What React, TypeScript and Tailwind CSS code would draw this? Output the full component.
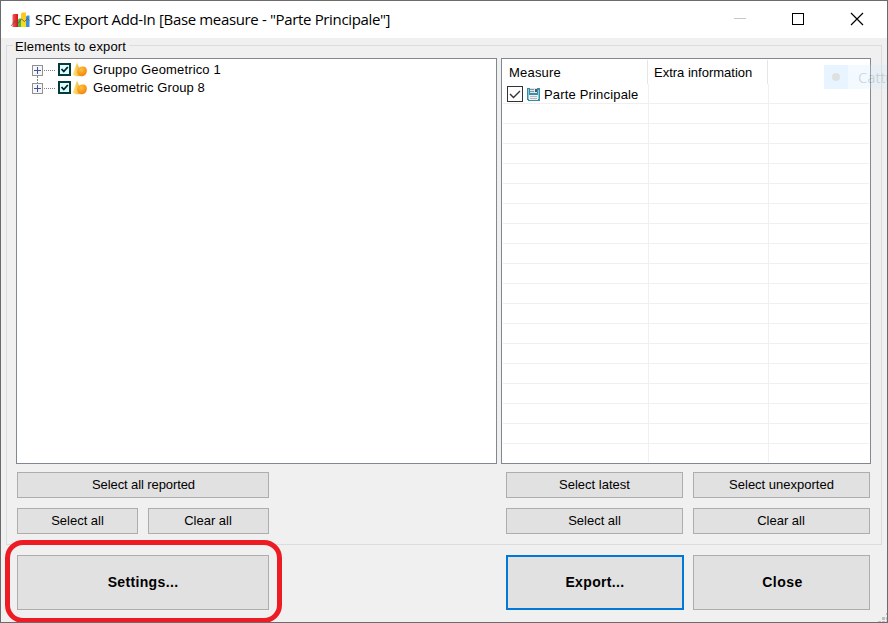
import React from 'react';
import clsx from 'clsx';

interface PushButtonProps {
  label: string;
  className?: string;
  textClass?: string;
  primary?: boolean;
}

const PushButton = ({ label, className, textClass, primary }: PushButtonProps) => (
  <button
    className={clsx(
      'flex shrink-0 items-center justify-center bg-[#e1e1e1] whitespace-nowrap',
      primary ? 'border-2 border-[#0078d7]' : 'border border-[#adadad]',
      className
    )}
  >
    <span className={textClass}>{label}</span>
  </button>
);

const AppIcon = () => (
  <svg width="20" height="18" viewBox="0 0 20 18" className="shrink-0">
    <defs>
      <linearGradient id="bar-red" x1="0" y1="0" x2="1" y2="0">
        <stop offset="0" stopColor="#f45a5a" />
        <stop offset="1" stopColor="#d81010" />
      </linearGradient>
      <linearGradient id="bar-yellow" x1="0" y1="0" x2="0" y2="1">
        <stop offset="0" stopColor="#ffc41c" />
        <stop offset="1" stopColor="#f4e020" />
      </linearGradient>
    </defs>
    <path d="M2.500 4l1-1H8v13H2.500z" fill="url(#bar-red)" />
    <path d="M8 8.500l1-1h2V16H8z" fill="#4cb848" />
    <path d="M11 2.500L12 1.500h4V16h-5z" fill="url(#bar-yellow)" />
    <path d="M16 5.500l1-1h2.500V16H16z" fill="#3f8fd8" />
    <path d="M1 15l4-5 3 2.500 3.500-4.500 3 2.500 3-3 2 2" fill="none" stroke="#555" strokeWidth="1" opacity=".75" />
  </svg>
);

const ShapesIcon = () => (
  <svg width="16" height="16" viewBox="0 0 16 16" className="shrink-0">
    <defs>
      <linearGradient id="cone" x1="0" y1="0" x2="1" y2="0">
        <stop offset="0" stopColor="#ffe884" />
        <stop offset="1" stopColor="#eda51c" />
      </linearGradient>
      <radialGradient id="ball" cx=".4" cy=".3" r=".7">
        <stop offset="0" stopColor="#ffc13c" />
        <stop offset="1" stopColor="#ef8510" />
      </radialGradient>
    </defs>
    <path d="M5 .5L.8 12.500c1.200 2 7.400 2.300 9.200.8z" fill="url(#cone)" />
    <path d="M5.500 8C6.500 4.200 12 3.600 14 5.800c1.800 2.600.6 7.200-2.700 8.300C8 15 4.500 12.500 5.500 8z" fill="url(#ball)" />
  </svg>
);

const FloppyIcon = () => (
  <svg width="13" height="13" viewBox="0 0 13 13" className="shrink-0" shapeRendering="crispEdges">
    <path d="M0 0h12l1 1v12H1l-1-1z" fill="#3c8ca6" />
    <path d="M1 1h1v10H1zM11 2h1v9h-1z" fill="#7ad0e4" />
    <path d="M3 0h7v5H3z" fill="#dfe5e8" />
    <path d="M3 1h4v1H3zM3 3h4v1H3z" fill="#8b979c" />
    <path d="M8 1h2v3H8z" fill="#4a5a60" />
    <path d="M2 7h9v5H2z" fill="#f0f0f0" />
    <path d="M3 8h7v1H3zM3 10h7v1H3z" fill="#b4bcc0" />
  </svg>
);

const TreeRow = ({ label, last, textClass }: { label: string; last?: boolean; textClass: string }) => (
  <div className="flex h-[18px] items-center">
    <svg width="24" height="18" className="shrink-0" shapeRendering="crispEdges">
      {last ? (
        <path d="M5.500 0v4" stroke="#808080" strokeDasharray="2 1" />
      ) : (
        <path d="M5.500 15v3" stroke="#808080" strokeDasharray="2 1" />
      )}
      <path d="M12 9.500h11" stroke="#808080" strokeDasharray="1 1" />
      <rect x=".5" y="4.500" width="10" height="10" fill="#f6f6f6" stroke="#919191" />
      <path d="M2 9.500h7M5.500 6v7" stroke="#3a52a8" />
    </svg>
    <svg width="13" height="18" className="ml-0.5 shrink-0">
      <rect x="1" y="3" width="11" height="11" fill="#dcffff" stroke="#043c3c" strokeWidth="2" />
      <path d="M3.500 8l2.300 2.500 4-4.500" fill="none" stroke="#022" strokeWidth="1.800" />
    </svg>
    <div className="ml-px">
      <ShapesIcon />
    </div>
    <span className={clsx('ml-[5px] whitespace-nowrap', textClass)}>{label}</span>
  </div>
);

const rows = Array.from({ length: 18 }, (_, i) => i);

const TitleBar = () => (
  <div className="flex h-[37px] shrink-0 items-center bg-white pl-[9px]">
    <AppIcon />
    <span className="mb-0.5 ml-[5px] whitespace-nowrap font-['Open_Sans',sans-serif] text-[15px] tracking-[-0.35px]">
      SPC Export Add-In [Base measure - "Parte Principale"]
    </span>
    <svg width="135" height="20" className="mr-[21px] mb-px ml-auto shrink-0" shapeRendering="crispEdges">
      <path d="M3 9.500h12" stroke="#c8c8c8" />
      <rect x="61.500" y="4.500" width="11" height="11" fill="none" stroke="#000" />
      <path d="M120 4l12 12M132 4l-12 12" stroke="#000" strokeWidth="1.200" shapeRendering="auto" />
    </svg>
  </div>
);

const MeasureList = () => (
  <div className="flex w-[370px] shrink-0 flex-col border border-[#828790] bg-white px-px pt-px">
    <div className="flex h-6 shrink-0 items-center">
      <div className="flex h-full w-[145px] items-center border-r border-[#e5e5e5] pt-px pl-1.5">
        <span className="tracking-[0.2px]">Measure</span>
      </div>
      <div className="flex h-full w-[120px] items-center border-r border-[#e5e5e5] pt-px pl-1.5">
        <span className="whitespace-nowrap">Extra information</span>
      </div>
    </div>
    {rows.map((row) => (
      <div key={row} className="flex h-5 shrink-0 border-b border-[#f0f0f0]">
        <div className="-mb-px flex w-[146px] items-center border-r border-[#f0f0f0] pl-1">
          {row === 0 && (
            <>
              <svg width="16" height="16" className="shrink-0">
                <rect x=".5" y=".5" width="15" height="15" fill="#fff" stroke="#333" />
                <path d="M3 8l3.500 3.500L13 5" fill="none" stroke="#333" strokeWidth="1.400" />
              </svg>
              <div className="ml-1">
                <FloppyIcon />
              </div>
              <span className="mt-0.5 ml-1 whitespace-nowrap tracking-[0.17px]">Parte Principale</span>
            </>
          )}
        </div>
        <div className="-mb-px w-[120px] border-r border-[#f0f0f0]" />
      </div>
    ))}
    <div className="flex h-[18px]">
      <div className="w-[146px] border-r border-[#f0f0f0]" />
      <div className="w-[120px] border-r border-[#f0f0f0]" />
    </div>
  </div>
);

const App = () => (
  <div className="relative flex h-[623px] w-[888px] flex-col overflow-hidden border border-[#6b6b6b] bg-[#f0f0f0] font-['Liberation_Sans',Arial,sans-serif] text-[13px] leading-4 text-black">
    <TitleBar />

    <fieldset className="mt-[7px] ml-[5px] flex h-[500px] w-[876px] shrink-0 flex-col border border-[#dcdcdc] pl-[9px]">
      <div className="-mt-[7px] -ml-[3px] flex h-[19px] w-[116px] shrink-0 bg-[#f0f0f0] pl-0.5">
        <span className="whitespace-nowrap tracking-[0.15px]">Elements to export</span>
      </div>

      <div className="flex h-[406px] shrink-0 gap-1">
        <div className="w-[481px] shrink-0 border border-[#828790] bg-white pt-0.5 pl-[15px]">
          <TreeRow label="Gruppo Geometrico 1" textClass="tracking-[0.15px]" />
          <TreeRow label="Geometric Group 8" textClass="tracking-[0.08px]" last />
        </div>
        <MeasureList />
      </div>

      <div className="mt-2 ml-px flex justify-between pr-[11px]">
        <div className="flex w-[252px] flex-wrap justify-between gap-y-2.5">
          <PushButton label="Select all reported" className="h-[26px] w-[252px]" textClass="pl-px tracking-[-0.1px]" />
          <PushButton label="Select all" className="h-[26px] w-[121px]" />
          <PushButton label="Clear all" className="h-[26px] w-[121px]" textClass="pr-px" />
        </div>
        <div className="grid grid-cols-2 gap-2.5">
          <PushButton label="Select latest" className="h-[26px] w-[177px]" />
          <PushButton label="Select unexported" className="h-[26px] w-[177px]" />
          <PushButton label="Select all" className="h-[26px] w-[177px]" />
          <PushButton label="Clear all" className="h-[26px] w-[177px]" textClass="pr-px" />
        </div>
      </div>
    </fieldset>

    <div className="mt-2.5 ml-4 flex font-bold">
      <PushButton label="Settings..." className="h-[55px] w-[252px]" textClass="pb-0.5 text-[14px] tracking-[0.35px]" />
      <PushButton label="Export..." className="ml-[237px] h-[55px] w-[178px]" textClass="pb-0.5 text-[14px] tracking-[0.35px]" primary />
      <PushButton label="Close" className="ml-[9px] h-[55px] w-[177px]" textClass="pb-0.5 pl-0.5 text-[14px] tracking-[0.5px]" />
    </div>

    {/* Highlight around the settings button */}
    <div className="absolute top-[539px] left-1 h-[83px] w-[277px] rounded-[18px] border-[5px] border-[#ed1c24]" />

    {/* Fading capture tooltip */}
    <div className="absolute top-16 left-[823px] flex h-6 w-[64px] items-center overflow-hidden bg-[#cce8ff]/25">
      <div className="flex h-6 w-6 shrink-0 items-center justify-center bg-[#cce8ff]/25">
        <div className="h-2 w-2 rounded-full bg-[#e0e0e0]" />
      </div>
      <span className="ml-2.5 font-['Open_Sans',sans-serif] text-[15px] tracking-[-0.3px] text-black/15">Cattu</span>
    </div>

    {/* Resize grip */}
    <svg width="9" height="9" className="absolute right-0 bottom-0" shapeRendering="crispEdges">
      <path d="M8 0h1v2H8zM4 4h3v3H4zM8 4h1v3H8zM0 8h3v1H0zM4 8h3v1H4zM8 8h1v1H8z" fill="#bfbfbf" />
    </svg>
  </div>
);

export default App;
